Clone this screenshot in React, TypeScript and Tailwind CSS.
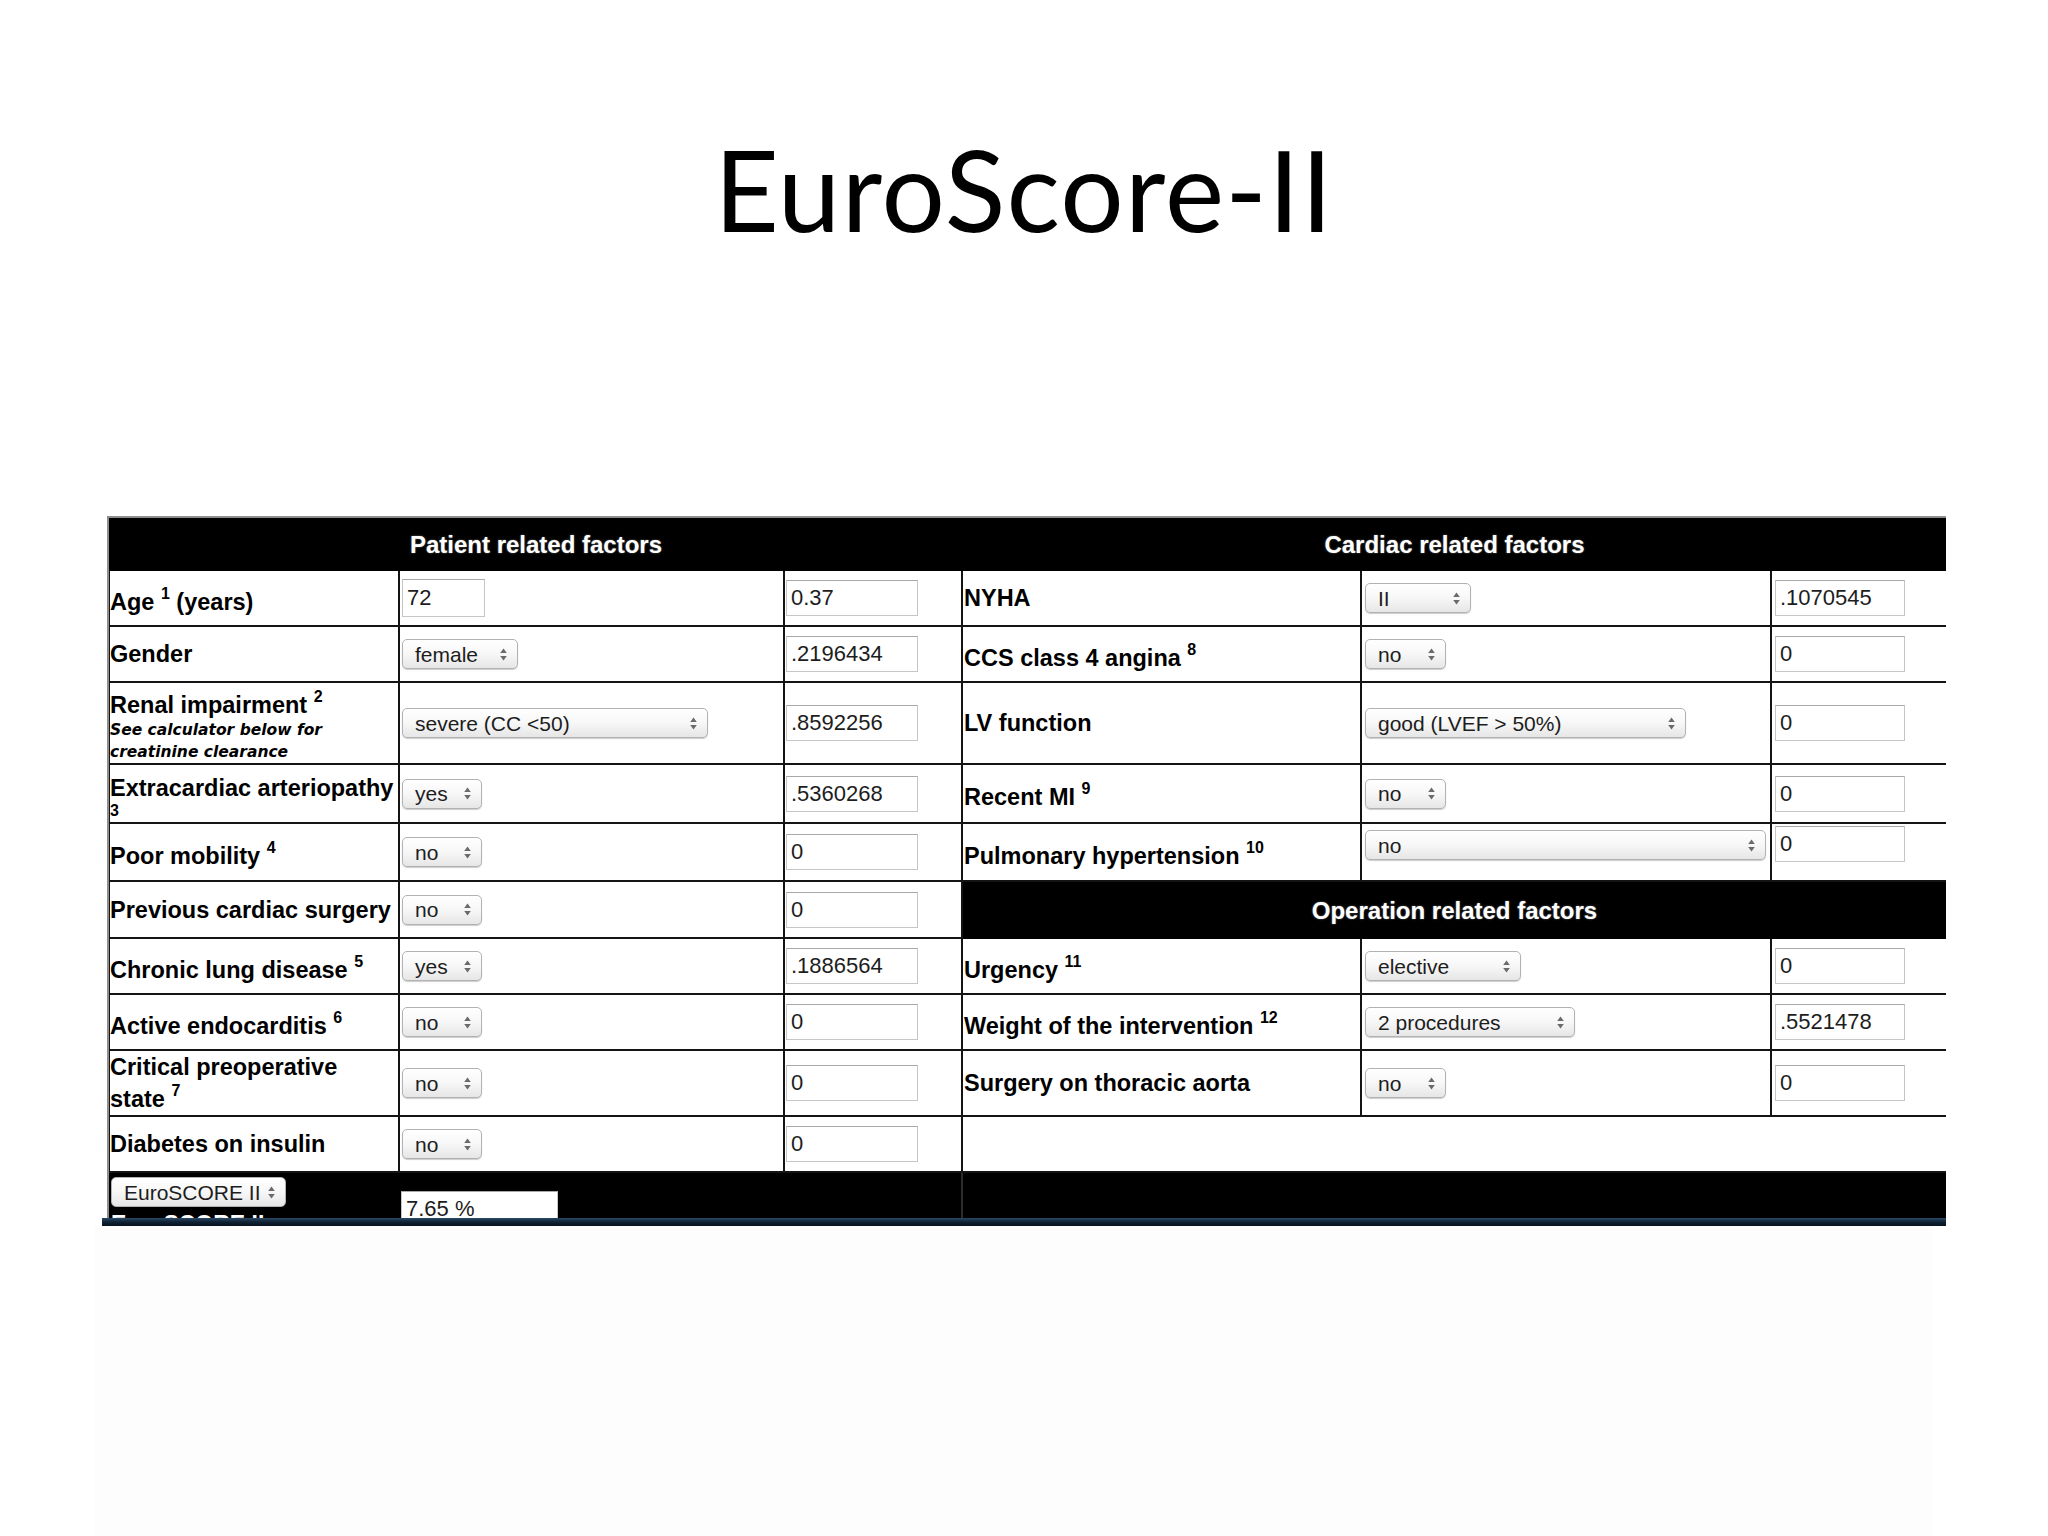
import React from "react";

function Arrows() {
  return (
    <svg width="9" height="15" viewBox="0 0 9 15" className="shrink-0">
      <path d="M4.5 1.5 L7.8 6 H1.2 Z" fill="#6a6a6a" />
      <path d="M4.5 13.5 L7.8 9 H1.2 Z" fill="#6a6a6a" />
    </svg>
  );
}

function Select({ value, className = "" }: { value: string; className?: string }) {
  return (
    <div
      className={`inline-flex h-[30px] items-center justify-between rounded-[5px] border border-[#b2b2b2] bg-linear-to-b from-white via-[#f7f7f7] to-[#e6e6e6] pl-[12px] pr-[9px] align-middle text-[21px] font-normal leading-none text-[#1d1d1d] shadow-[0_1px_1px_rgba(0,0,0,0.2)] ${className}`}
    >
      <span>{value}</span>
      <Arrows />
    </div>
  );
}

function Field({ value, className = "" }: { value: string; className?: string }) {
  return (
    <div
      className={`flex h-[36px] items-center border border-[#c6c6c6] border-t-[#a9a9a9] bg-white pl-[4px] text-[22px] font-normal leading-none text-[#1d1d1d] ${className}`}
    >
      {value}
    </div>
  );
}

function Sup({ children }: { children: React.ReactNode }) {
  return <sup className="-top-[11px] text-[16px] font-bold">{children}</sup>;
}

const c1 = "border-l border-r-2 border-b-2 border-[#141414] text-[23.5px] font-bold leading-[28px] text-black";
const c1s = "border-l border-r-2 border-b-2 border-[#141414] pt-[7px] text-[23.5px] font-bold leading-[28px] text-black";
const c2 = "border-r-2 border-b-2 border-[#141414] pl-[2px]";
const c3 = "border-r-2 border-b-2 border-[#141414] pl-[1px]";
const c4 = "border-r-2 border-b-2 border-[#141414] pl-[1px] text-[23.5px] font-bold leading-[28px] text-black";
const c4s = "border-r-2 border-b-2 border-[#141414] pl-[1px] pt-[7px] text-[23.5px] font-bold leading-[28px] text-black";
const c5 = "border-r-2 border-b-2 border-[#141414] pl-[3px]";
const c6 = "border-b-2 border-[#141414] pl-[3px]";
const head =
  "bg-black text-center text-[24px] font-bold text-white [text-shadow:0_0_2px_rgba(255,255,255,0.45)]";

export default function App() {
  return (
    <div className="h-[1536px] w-[2048px] overflow-hidden bg-white font-['Liberation_Sans',Arial,sans-serif]">
      <div className="h-[243px] pt-[133px] text-center font-['Lato',sans-serif] text-[112px] leading-[112px] tracking-[0.012em] text-black">
        EuroScore-II
      </div>

      <table className="mt-[273px] ml-[107px] w-[1839px] table-fixed border-separate border-spacing-0 border-t-2 border-l-2 border-[#8e8e8e]">
        <colgroup>
          <col className="w-[291px]" />
          <col className="w-[385px]" />
          <col className="w-[178px]" />
          <col className="w-[399px]" />
          <col className="w-[410px]" />
          <col className="w-[174px]" />
        </colgroup>
        <tbody>
          <tr>
            <td colSpan={3} className={`h-[53px] ${head}`}>
              Patient related factors
            </td>
            <td colSpan={3} className={head}>
              Cardiac related factors
            </td>
          </tr>

          <tr>
            <td className={`h-[56px] ${c1s}`}>
              Age <Sup>1</Sup> (years)
            </td>
            <td className={c2}>
              <Field value="72" className="h-[38px] w-[83px]" />
            </td>
            <td className={c3}>
              <Field value="0.37" className="w-[132px]" />
            </td>
            <td className={c4}>NYHA</td>
            <td className={c5}>
              <Select value="II" className="w-[106px]" />
            </td>
            <td className={c6}>
              <Field value=".1070545" className="w-[130px]" />
            </td>
          </tr>

          <tr>
            <td className={`h-[56px] ${c1}`}>Gender</td>
            <td className={c2}>
              <Select value="female" className="w-[116px]" />
            </td>
            <td className={c3}>
              <Field value=".2196434" className="w-[132px]" />
            </td>
            <td className={c4s}>
              CCS class 4 angina <Sup>8</Sup>
            </td>
            <td className={c5}>
              <Select value="no" className="w-[81px]" />
            </td>
            <td className={c6}>
              <Field value="0" className="w-[130px]" />
            </td>
          </tr>

          <tr>
            <td className={`h-[82px] ${c1s}`}>
              <div>
                Renal impairment <Sup>2</Sup>
              </div>
              <div className="font-['DejaVu_Sans',sans-serif] text-[15.5px] leading-[22px] italic">
                See calculator below for
                <br />
                creatinine clearance
              </div>
            </td>
            <td className={c2}>
              <Select value="severe (CC <50)" className="w-[306px]" />
            </td>
            <td className={c3}>
              <Field value=".8592256" className="w-[132px]" />
            </td>
            <td className={c4}>LV function</td>
            <td className={c5}>
              <Select value="good (LVEF > 50%)" className="w-[321px]" />
            </td>
            <td className={c6}>
              <Field value="0" className="w-[130px]" />
            </td>
          </tr>

          <tr>
            <td className={`h-[59px] pt-[6px] ${c1}`}>
              <div>Extracardiac arteriopathy</div>
              <div className="text-[16px] leading-[18px]">3</div>
            </td>
            <td className={c2}>
              <Select value="yes" className="w-[80px]" />
            </td>
            <td className={c3}>
              <Field value=".5360268" className="w-[132px]" />
            </td>
            <td className={c4s}>
              Recent MI <Sup>9</Sup>
            </td>
            <td className={c5}>
              <Select value="no" className="w-[81px]" />
            </td>
            <td className={c6}>
              <Field value="0" className="w-[130px]" />
            </td>
          </tr>

          <tr>
            <td className={`h-[58px] ${c1s}`}>
              Poor mobility <Sup>4</Sup>
            </td>
            <td className={c2}>
              <Select value="no" className="w-[80px]" />
            </td>
            <td className={c3}>
              <Field value="0" className="w-[132px]" />
            </td>
            <td className={c4s}>
              Pulmonary hypertension <Sup>10</Sup>
            </td>
            <td className={`align-top pt-[6px] ${c5}`}>
              <Select value="no" className="h-[28px] w-[401px]" />
            </td>
            <td className={`align-top pt-[2px] ${c6}`}>
              <Field value="0" className="w-[130px]" />
            </td>
          </tr>

          <tr>
            <td className={`h-[57px] ${c1}`}>Previous cardiac surgery</td>
            <td className={c2}>
              <Select value="no" className="w-[80px]" />
            </td>
            <td className={c3}>
              <Field value="0" className="w-[132px]" />
            </td>
            <td colSpan={3} className={head}>
              Operation related factors
            </td>
          </tr>

          <tr>
            <td className={`h-[56px] ${c1s}`}>
              Chronic lung disease <Sup>5</Sup>
            </td>
            <td className={c2}>
              <Select value="yes" className="w-[80px]" />
            </td>
            <td className={c3}>
              <Field value=".1886564" className="w-[132px]" />
            </td>
            <td className={c4s}>
              Urgency <Sup>11</Sup>
            </td>
            <td className={c5}>
              <Select value="elective" className="w-[156px]" />
            </td>
            <td className={c6}>
              <Field value="0" className="w-[130px]" />
            </td>
          </tr>

          <tr>
            <td className={`h-[56px] ${c1s}`}>
              Active endocarditis <Sup>6</Sup>
            </td>
            <td className={c2}>
              <Select value="no" className="w-[80px]" />
            </td>
            <td className={c3}>
              <Field value="0" className="w-[132px]" />
            </td>
            <td className={c4s}>
              Weight of the intervention <Sup>12</Sup>
            </td>
            <td className={c5}>
              <Select value="2 procedures" className="w-[210px]" />
            </td>
            <td className={c6}>
              <Field value=".5521478" className="w-[130px]" />
            </td>
          </tr>

          <tr>
            <td className={`h-[66px] ${c1} leading-[32px]`}>
              Critical preoperative
              <br />
              state <Sup>7</Sup>
            </td>
            <td className={c2}>
              <Select value="no" className="w-[80px]" />
            </td>
            <td className={c3}>
              <Field value="0" className="w-[132px]" />
            </td>
            <td className={c4}>Surgery on thoracic aorta</td>
            <td className={c5}>
              <Select value="no" className="w-[81px]" />
            </td>
            <td className={c6}>
              <Field value="0" className="w-[130px]" />
            </td>
          </tr>

          <tr>
            <td className={`h-[56px] ${c1}`}>Diabetes on insulin</td>
            <td className={c2}>
              <Select value="no" className="w-[80px]" />
            </td>
            <td className={c3}>
              <Field value="0" className="w-[132px]" />
            </td>
            <td colSpan={3} className="border-b-2 border-[#141414]" />
          </tr>

          <tr>
            <td className="h-[45px] bg-black p-0 align-top">
              <div className="h-[45px] overflow-hidden pt-[4px] pl-[2px]">
                <Select value="EuroSCORE II" className="h-[26px] w-[175px]" />
                <div className="mt-[4px] text-[23px] font-bold leading-[26px] text-white">EuroSCORE II</div>
              </div>
            </td>
            <td className="bg-black p-0 align-top">
              <div className="h-[45px] overflow-hidden pt-[18px] pl-[1px]">
                <Field value="7.65 %" className="w-[157px]" />
              </div>
            </td>
            <td className="border-r-2 border-[#2c2c2c] bg-black" />
            <td colSpan={3} className="bg-black" />
          </tr>
        </tbody>
      </table>

      <div className="ml-[102px] h-[8px] w-[1844px] bg-linear-to-b from-[#2a4a66] via-[#102234] to-[#08121c]" />
      <div className="ml-[94px] h-[320px] w-[1839px] bg-[#fdfdfd]" />
    </div>
  );
}
